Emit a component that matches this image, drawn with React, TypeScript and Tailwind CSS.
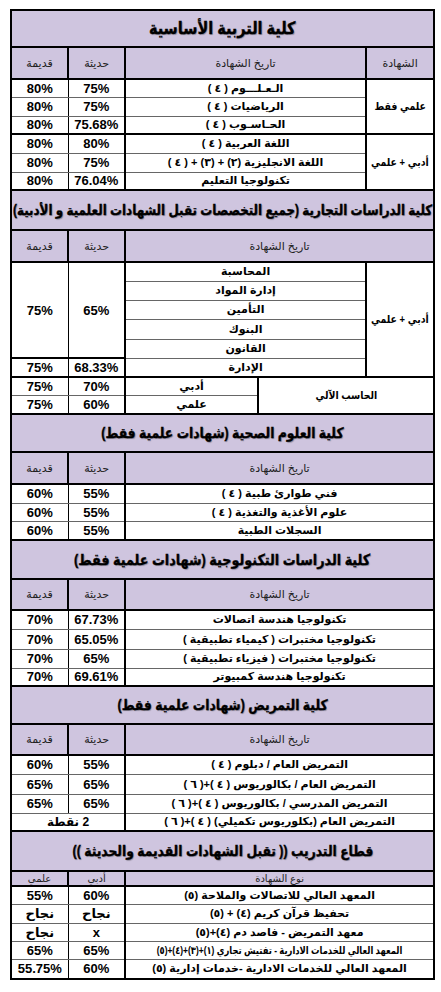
import React from "react";

const LAV = "bg-[#cfc5df]";
const topT = "border-t-2 border-t-black";
const topN = "border-t border-t-[#666]";

function Title({ h, size, children }: { h: string; size: string; children: React.ReactNode }) {
  return (
    <tr className={h}>
      <td colSpan={5} className={`${LAV} border-2 border-black p-0 text-black`}>
        <div className="flex justify-center">
          <span
            className={`shrink-0 whitespace-nowrap scale-x-[0.85] font-bold leading-none [text-shadow:1px_1px_1px_rgba(0,0,0,0.3)] [-webkit-text-stroke:0.35px_black] ${size}`}
          >
            {children}
          </span>
        </div>
      </td>
    </tr>
  );
}

function HeadCell({
  children,
  colSpan,
  small,
}: {
  children: React.ReactNode;
  colSpan?: number;
  small?: boolean;
}) {
  return (
    <td
      colSpan={colSpan}
      className={`${LAV} border-2 border-black p-0 text-center font-normal leading-none text-[#222] ${
        small ? "text-[10px]" : "text-[11px]"
      }`}
    >
      {children}
    </td>
  );
}

function Txt({
  children,
  top,
  colSpan,
  rowSpan,
}: {
  children: React.ReactNode;
  top?: boolean;
  colSpan?: number;
  rowSpan?: number;
}) {
  return (
    <td
      colSpan={colSpan}
      rowSpan={rowSpan}
      className={`${top ? topT : topN} border-b border-b-[#666] border-x-2 border-x-black p-0 text-center text-[11px] font-bold leading-none text-black whitespace-nowrap`}
    >
      {children}
    </td>
  );
}

function N2({
  children,
  top,
  rowSpan,
}: {
  children: React.ReactNode;
  top?: boolean;
  rowSpan?: number;
}) {
  return (
    <td
      rowSpan={rowSpan}
      className={`${top ? topT : topN} border-b border-b-[#666] border-r-2 border-r-black border-l border-l-black p-0 text-center text-[13px] font-bold leading-none text-black`}
    >
      {children}
    </td>
  );
}

function N1({
  children,
  top,
  rowSpan,
}: {
  children: React.ReactNode;
  top?: boolean;
  rowSpan?: number;
}) {
  return (
    <td
      rowSpan={rowSpan}
      className={`${top ? topT : topN} border-b border-b-[#666] border-l-2 border-l-black border-r border-r-black p-0 text-center text-[13px] font-bold leading-none text-black`}
    >
      {children}
    </td>
  );
}

function Lab({ children, rowSpan, colSpan }: { children: React.ReactNode; rowSpan?: number; colSpan?: number }) {
  return (
    <td rowSpan={rowSpan} colSpan={colSpan} className="border-2 border-black p-0 text-black">
      <div className="flex justify-center">
        <span className="shrink-0 whitespace-nowrap scale-x-[0.85] text-[11px] font-bold leading-none">
          {children}
        </span>
      </div>
    </td>
  );
}

function Std({
  h,
  text,
  a,
  b,
  top,
}: {
  h: string;
  text: React.ReactNode;
  a: React.ReactNode;
  b: React.ReactNode;
  top?: boolean;
}) {
  return (
    <tr className={h}>
      <Txt colSpan={3} top={top}>
        {text}
      </Txt>
      <N2 top={top}>{a}</N2>
      <N1 top={top}>{b}</N1>
    </tr>
  );
}

function Header3({ h, label = "تاريخ الشهادة", a = "حديثة", b = "قديمة", small }: { h: string; label?: string; a?: string; b?: string; small?: boolean }) {
  return (
    <tr className={h}>
      <HeadCell colSpan={3} small={small}>{label}</HeadCell>
      <HeadCell small={small}>{a}</HeadCell>
      <HeadCell small={small}>{b}</HeadCell>
    </tr>
  );
}

export default function App() {
  return (
    <div className="h-[992px] w-[441px] bg-white pl-[10px] pt-[9px] font-['Liberation_Sans','DejaVu_Sans',sans-serif]">
      <table dir="rtl" className="w-[423px] table-fixed border-collapse border-2 border-black">
        <colgroup>
          <col className="w-[68px]" />
          <col className="w-[108px]" />
          <col className="w-[133px]" />
          <col className="w-[57px]" />
          <col className="w-[57px]" />
        </colgroup>
        <tbody>
          {/* Section 1 */}
          <Title h="h-[37px]" size="text-[17px]">كلية التربية الأساسية</Title>
          <tr className="h-[32px]">
            <HeadCell>الشهادة</HeadCell>
            <HeadCell colSpan={2}>تاريخ الشهادة</HeadCell>
            <HeadCell>حديثة</HeadCell>
            <HeadCell>قديمة</HeadCell>
          </tr>
          <tr className="h-[18px]">
            <Lab rowSpan={3}>علمي فقط</Lab>
            <Txt colSpan={2} top>الـعـلـــوم ( ٤ )</Txt>
            <N2 top>75%</N2>
            <N1 top>80%</N1>
          </tr>
          <tr className="h-[19px]">
            <Txt colSpan={2}>الرياضيات ( ٤ )</Txt>
            <N2>75%</N2>
            <N1>80%</N1>
          </tr>
          <tr className="h-[18px]">
            <Txt colSpan={2}>الحـاسـوب ( ٤ )</Txt>
            <N2>75.68%</N2>
            <N1>80%</N1>
          </tr>
          <tr className="h-[19px]">
            <Lab rowSpan={3}>أدبي + علمي</Lab>
            <Txt colSpan={2} top>اللغة العربية ( ٤ )</Txt>
            <N2 top>80%</N2>
            <N1 top>80%</N1>
          </tr>
          <tr className="h-[19px]">
            <Txt colSpan={2}>اللغة الانجليزية (٢) + (٣) + ( ٤ )</Txt>
            <N2>75%</N2>
            <N1>80%</N1>
          </tr>
          <tr className="h-[18px]">
            <Txt colSpan={2}>تكنولوجيا التعليم</Txt>
            <N2>76.04%</N2>
            <N1>80%</N1>
          </tr>

          {/* Section 2 */}
          <Title h="h-[40px]" size="text-[14px]">كلية الدراسات التجارية (جميع التخصصات تقبل الشهادات العلمية و الأدبية)</Title>
          <Header3 h="h-[32px]" />
          <tr className="h-[19px]">
            <Lab rowSpan={6}>أدبي + علمي</Lab>
            <Txt colSpan={2} top>المحاسبة</Txt>
            <N2 top rowSpan={5}>65%</N2>
            <N1 top rowSpan={5}>75%</N1>
          </tr>
          <tr className="h-[19px]">
            <Txt colSpan={2}>إدارة المواد</Txt>
          </tr>
          <tr className="h-[19px]">
            <Txt colSpan={2}>التأمين</Txt>
          </tr>
          <tr className="h-[20px]">
            <Txt colSpan={2}>البنوك</Txt>
          </tr>
          <tr className="h-[19px]">
            <Txt colSpan={2}>القانون</Txt>
          </tr>
          <tr className="h-[19px]">
            <Txt colSpan={2}>الإدارة</Txt>
            <N2 top>68.33%</N2>
            <N1 top>75%</N1>
          </tr>
          <tr className="h-[18px]">
            <Lab rowSpan={2} colSpan={2}>الحاسب الآلي</Lab>
            <Txt top>أدبي</Txt>
            <N2 top>70%</N2>
            <N1 top>75%</N1>
          </tr>
          <tr className="h-[19px]">
            <Txt>علمي</Txt>
            <N2>60%</N2>
            <N1>75%</N1>
          </tr>

          {/* Section 3 */}
          <Title h="h-[38px]" size="text-[14.5px]">كلية العلوم الصحية (شهادات علمية فقط)</Title>
          <Header3 h="h-[32px]" />
          <Std h="h-[19px]" top text="فني طوارئ طبية ( ٤ )" a="55%" b="60%" />
          <Std h="h-[18px]" text="علوم الأغذية والتغذية ( ٤ )" a="55%" b="60%" />
          <Std h="h-[19px]" text="السجلات الطبية" a="55%" b="60%" />

          {/* Section 4 */}
          <Title h="h-[39px]" size="text-[15px]">كلية الدراسات التكنولوجية  (شهادات علمية فقط)</Title>
          <Header3 h="h-[31px]" />
          <Std h="h-[19px]" top text="تكنولوجيا هندسة اتصالات" a="67.73%" b="70%" />
          <Std h="h-[20px]" text="تكنولوجيا مختبرات ( كيمياء تطبيقية )" a="65.05%" b="70%" />
          <Std h="h-[19px]" text="تكنولوجيا مختبرات ( فيزياء تطبيقية )" a="65%" b="70%" />
          <Std h="h-[18px]" text="تكنولوجيا هندسة كمبيوتر" a="69.61%" b="70%" />

          {/* Section 5 */}
          <Title h="h-[38px]" size="text-[14.5px]">كلية التمريض (شهادات علمية فقط)</Title>
          <Header3 h="h-[31px]" />
          <Std h="h-[19px]" top text="التمريض العام / دبلوم ( ٤ )" a="55%" b="60%" />
          <Std h="h-[20px]" text="التمريض العام / بكالوريوس ( ٤ )+( ٦ )" a="65%" b="65%" />
          <Std h="h-[19px]" text="التمريض المدرسي / بكالوريوس ( ٤ )+( ٦ )" a="65%" b="65%" />
          <tr className="h-[18px]">
            <Txt colSpan={3}>التمريض العام (بكلوريوس تكميلي) ( ٤ )+( ٦ )</Txt>
            <td
              colSpan={2}
              className="border-t border-t-[#666] border-b border-b-[#666] border-x-2 border-x-black p-0 text-center text-[12px] font-bold leading-none text-black"
            >
              2 نقطة
            </td>
          </tr>

          {/* Section 6 */}
          <Title h="h-[40px]" size="text-[14.5px]">قطاع التدريب (( تقبل الشهادات القديمة والحديثة ))</Title>
          <Header3 h="h-[15px]" label="نوع الشهادة" a="أدبي" b="علمي" small />
          <Std h="h-[18px]" top text="المعهد العالي للاتصالات والملاحة (٥)" a="60%" b="55%" />
          <Std h="h-[19px]" text="تحفيظ قرآن كريم (٤) + (٥)" a="نجاح" b="نجاح" />
          <Std h="h-[18px]" text="معهد التمريض - فاصد دم (٤)+(٥)" a="x" b="نجاح" />
          <Std
            h="h-[18px]"
            text={
              <div className="flex justify-center">
                <span className="shrink-0 whitespace-nowrap scale-x-[0.8] text-[10.5px]">
                  المعهد العالي للخدمات الادارية  - تفتيش تجاري (١)+(٣)+(٤)+(٥)
                </span>
              </div>
            }
            a="65%"
            b="65%"
          />
          <Std h="h-[20px]" text="المعهد العالي للخدمات الادارية -خدمات إدارية (٥)" a="60%" b="55.75%" />
        </tbody>
      </table>
    </div>
  );
}
